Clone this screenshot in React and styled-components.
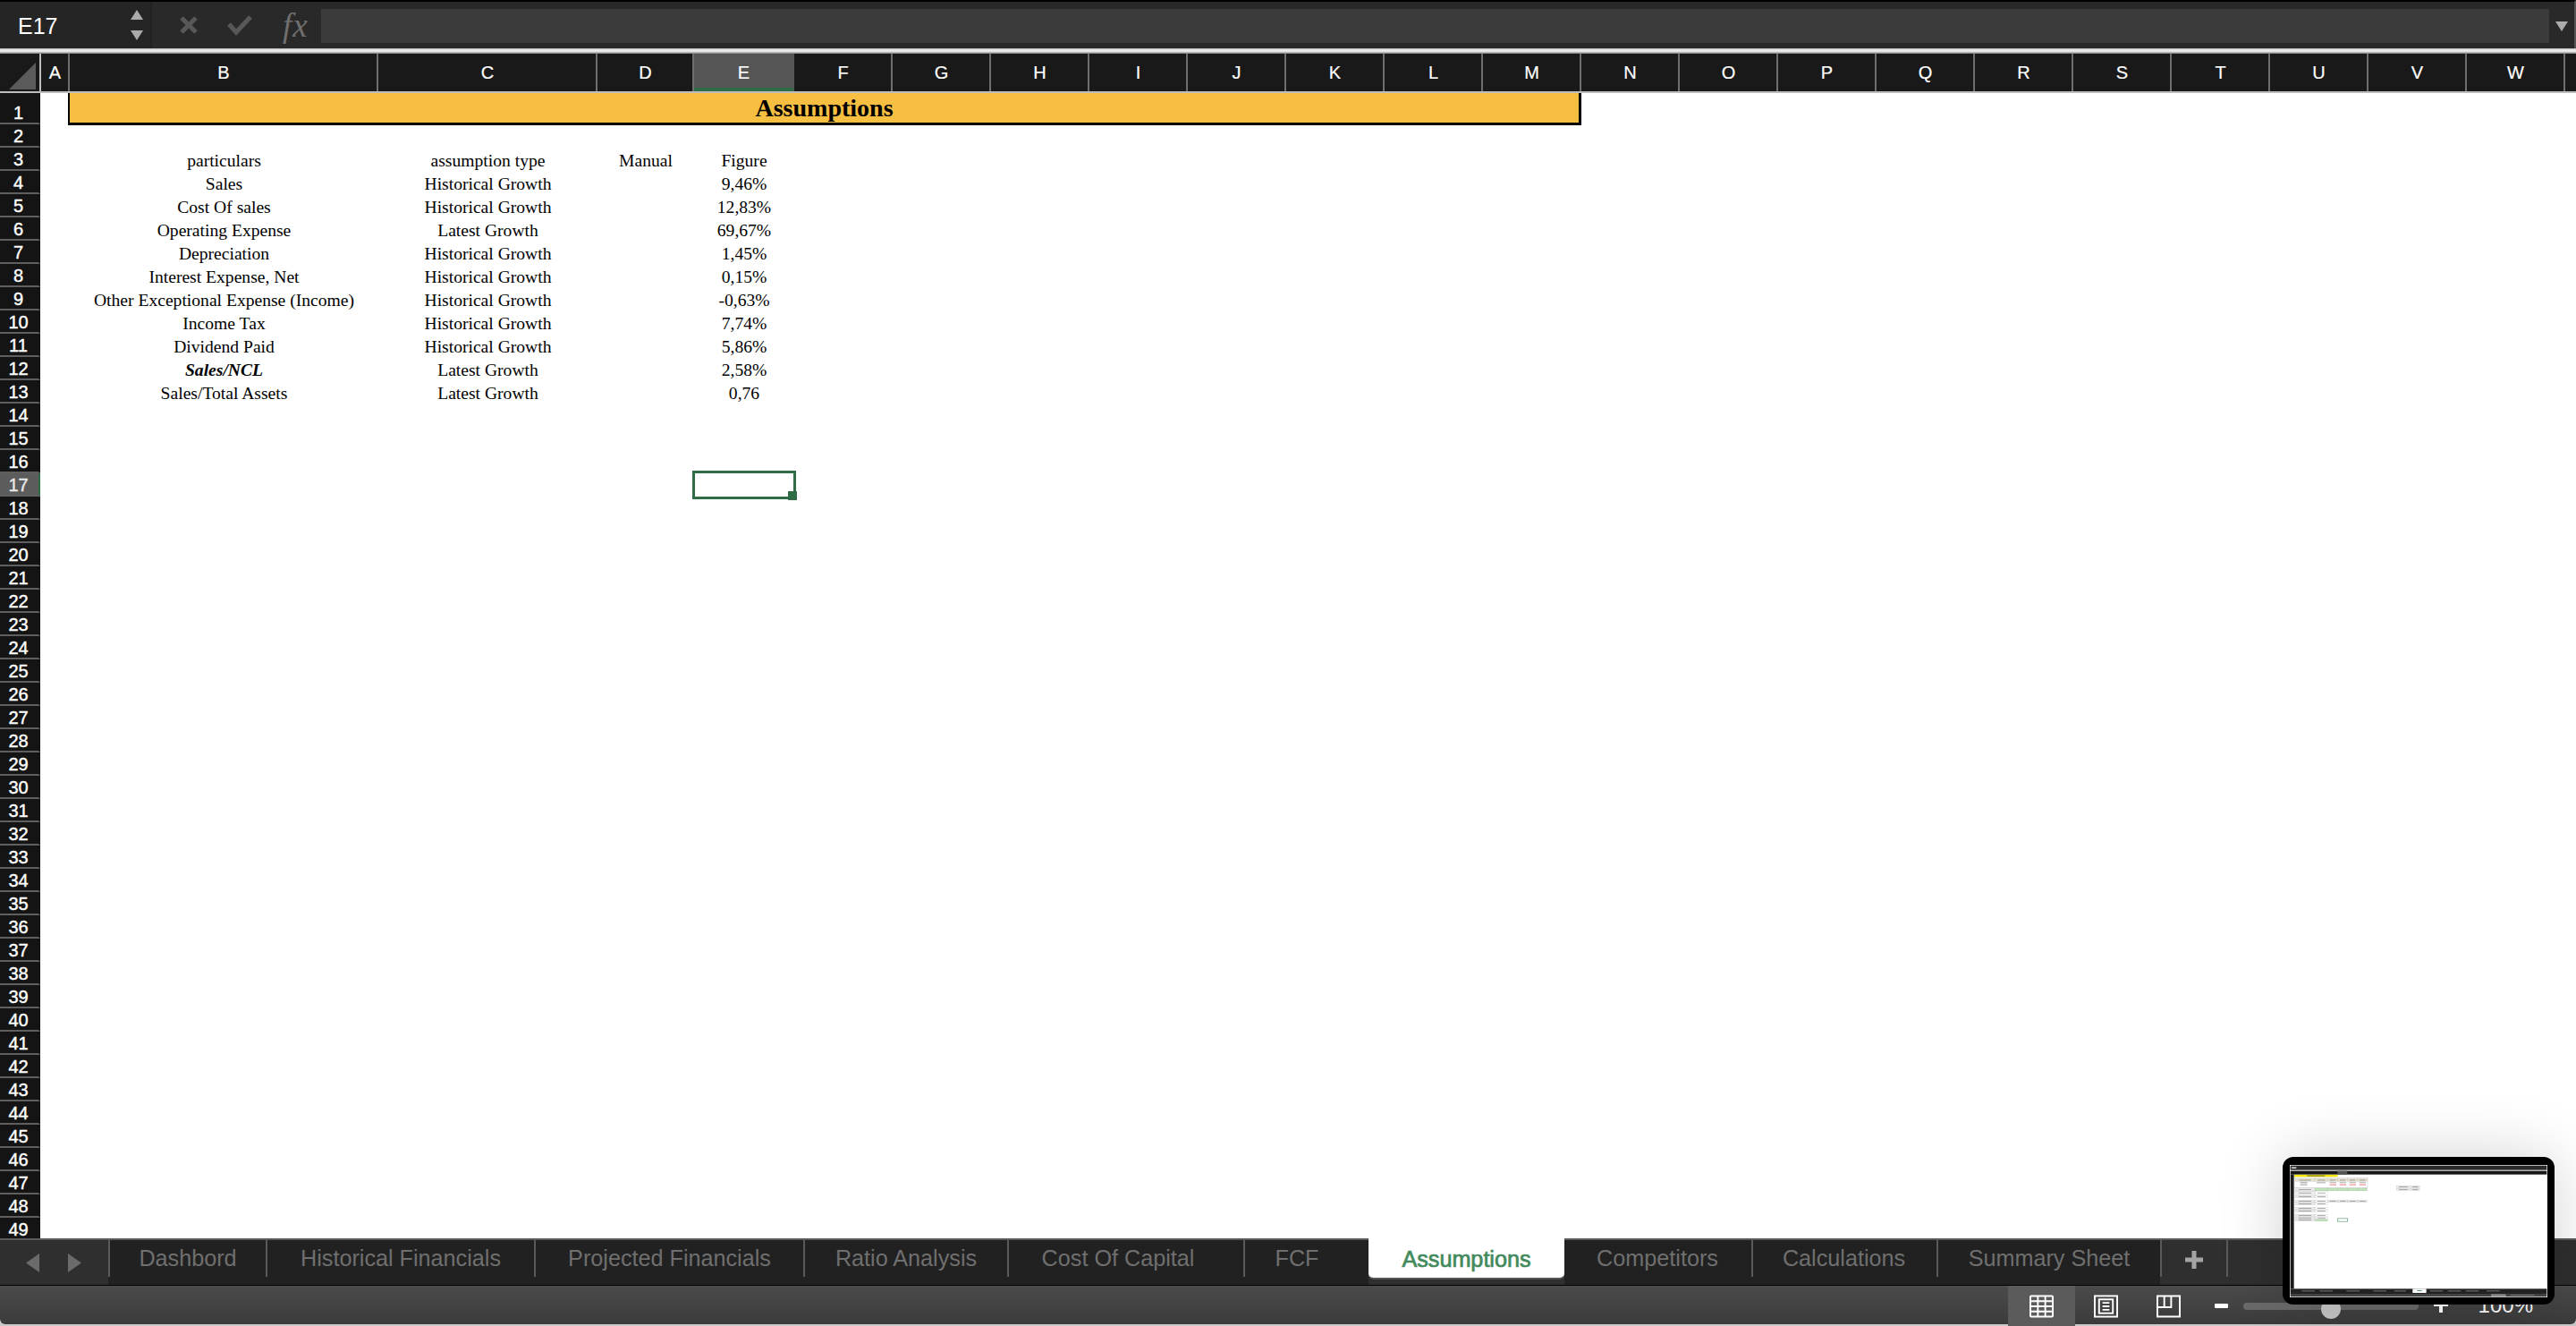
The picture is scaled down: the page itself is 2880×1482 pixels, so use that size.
import React from "react";
import styled, { createGlobalStyle } from "styled-components";

const Global = createGlobalStyle`
  html, body { margin: 0; padding: 0; background: #fff; overflow: hidden; }
  #root { width: 2880px; height: 1482px; }
`;

const Window = styled.div`
  position: relative; width: 2880px; height: 1482px; display: flex; flex-direction: column;
  overflow: hidden; background: #c9c9c9; font-family: "Liberation Sans", Arial, sans-serif;
`;
const Toolbar = styled.div`
  height: 52px; border-top: 2px solid #000; background: #292929; display: flex; align-items: stretch;
  box-sizing: content-box; flex: none; border-right: 2px solid #555;
`;
const NameBox = styled.div`
  width: 170px; display: flex; align-items: center; justify-content: space-between;
  background: #252525; border-right: 2px solid #222; padding: 2px 8px 0 20px; box-sizing: border-box;
  color: #fff; font-size: 25px;
`;
const Stepper = styled.div`display: flex; flex-direction: column; gap: 12px; margin-top: -2px;`;
const FormulaTools = styled.div`
  width: 189px; display: flex; align-items: center; padding-left: 30px; box-sizing: border-box;
`;
const Fx = styled.span`
  font-family: "Liberation Serif", serif; font-style: italic; font-size: 37px; color: #6f6f6f; margin-left: 33px; letter-spacing: 1px;
`;
const FormulaInput = styled.div`flex: 1; margin: 8px 0 6px; background: #3b3b3b;`;
const Expand = styled.div`width: 28px; display: flex; align-items: center; justify-content: center; padding-top: 2px;`;
const Rule = styled.div`
  height: 6px; flex: none; background: linear-gradient(#a8a8a8, #efefef 30%, #e4e4e4 60%, #777);
`;
const ColHeader = styled.div`
  height: 44px; box-sizing: border-box; flex: none; background: #191919; display: flex; border-bottom: 2px solid #bdbdbd;
`;
const Corner = styled.div`
  width: 46px; flex: none; border-right: 2px solid #bdbdbd; box-sizing: border-box; display: flex; align-items: flex-end;
`;
const ColCell = styled.div`
  width: ${p => p.$w}px; flex: none; box-sizing: border-box; display: flex; align-items: center; justify-content: center;
  padding-left: 1px;
  color: #fff; font-size: 20px; border-right: 2px solid #6e6e6e; position: relative; -webkit-text-stroke: 0.2px #fff;
  background: ${p => (p.$active ? "#555555" : "transparent")};
  ${p => p.$active ? "border-right-color:#555; border-bottom: 4px solid #2f6b45; padding-top: 4px;" : ""}
`;
const Sheet = styled.div`flex: 1; display: flex; min-height: 0; background: #fff; overflow: hidden;`;
const RowHeader = styled.div`width: 45px; flex: none; display: flex; flex-direction: column; background: #141414;`;
const RowNum = styled.div`
  height: ${p => p.$h}px; flex: none; box-sizing: border-box; width: 45px;
  display: flex; align-items: flex-end; justify-content: center; padding: 0 2px 0 0;
  color: ${p => (p.$active ? "#e8e8e8" : "#fff")}; font-size: 20px; line-height: 22px; -webkit-text-stroke: 0.4px currentColor;
  background: ${p => (p.$active ? "#5c5c5c" : "#141414")};
  border-bottom: 2px solid #5f5f5f;
  border-right: 2px solid ${p => (p.$active ? "#2f6b45" : "#141414")};
`;
const Grid = styled.div`
  flex: 1; display: grid; align-content: start;
  grid-template-columns: 33px 345px 245px 108px 112px repeat(18, 110px);
  grid-template-rows: 35px repeat(48, 26px);
`;
const Title = styled.div`
  grid-column: 2 / 14; grid-row: 1; background: #f6bf41; margin-left: -2px;
  border-left: 2px solid #000; border-right: 3px solid #000; border-bottom: 3px solid #000; box-sizing: border-box;
  display: flex; align-items: center; justify-content: center;
  font: bold 28px "Liberation Serif", serif; color: #000; height: 36px;
`;
const Cell = styled.div`
  grid-column: ${p => p.$col}; grid-row: ${p => p.$row};
  display: flex; align-items: center; justify-content: center; white-space: nowrap;
  font: ${p => (p.$em ? "italic bold" : "normal")} 19.6px/26px "Liberation Serif", serif; color: #000;
  padding: 4px 0 0 0; height: 26px; box-sizing: border-box;
`;
const Selection = styled.div`
  grid-column: 5; grid-row: 17; position: relative;
`;
const SelBox = styled.div`
  position: absolute; left: -2px; top: -3px; width: 116px; height: 32px; box-sizing: border-box; border: 3px solid #2f6b45;
`;
const SelHandle = styled.div`
  position: absolute; right: -4px; bottom: -4px; width: 10px; height: 10px; background: #2f6b45;
`;
const TabBar = styled.div`
  flex: none; display: flex; background: #2f2f2f; border-top: 2px solid #5c5c5c; border-bottom: 1px solid #000; box-sizing: content-box; height: 50px;
`;
const Scroller = styled.div`
  width: 121px; flex: none; display: flex; align-items: flex-start; gap: 32px; padding: 15px 0 0 29px; box-sizing: border-box; background: #2f2f2f;
`;
const Tabs = styled.div`display: flex; background: #212121; align-items: flex-start; height: 50px;`;
const Tab = styled.div`
  width: ${p => p.$w}px; flex: none; box-sizing: border-box; height: 41px;
  display: flex; align-items: center; justify-content: center; padding: 0 ${p => p.$pr || 0}px 0 0;
  border-left: 2px solid #5a5a5a; color: #6f6f6f; font-size: 25.2px; white-space: nowrap;
  ${p => p.$noRule ? "border-left-color: transparent;" : ""}
`;
const ActiveWrap = styled.div`
  width: ${p => p.$w}px; flex: none; height: 52px; background: #2f2f2f; margin-top: -2px;
`;
const ActiveTab = styled.div`
  height: 46px; background: #fff; border-bottom: 2px solid #555; border-radius: 0 0 6px 6px;
  display: flex; align-items: center; justify-content: center; padding-top: 2px; box-sizing: border-box;
  color: #428a5c; font-size: 25.2px; -webkit-text-stroke: 0.7px #428a5c;
`;
const AddTab = styled.div`
  width: 76px; flex: none; height: 41px; box-sizing: border-box; border-left: 2px solid #5a5a5a; border-right: 2px solid #5a5a5a;
  display: flex; align-items: center; justify-content: center; padding-top: 3px;
`;
const StatusBar = styled.div`
  flex: none; height: 43px; display: flex; align-items: stretch; justify-content: flex-end; border-radius: 0 0 6px 6px;
  background: linear-gradient(#4b4b4b, #3b3b3b); padding-right: 48px; margin-bottom: 2px;
`;
const ViewBtn = styled.div`
  width: ${p => p.$w}px; flex: none; display: flex; align-items: flex-start; justify-content: center; padding-top: 10px; box-sizing: border-box;
  background: ${p => (p.$active ? "#5b5b5b" : "transparent")};
  margin-bottom: ${p => (p.$active ? "-2px" : "0")};
`;
const ViewBtns = styled.div`display: flex; margin-right: 16px;`;
const Zoom = styled.div`display: flex; align-items: flex-start; padding-top: 20px; gap: 17px;`;
const Minus = styled.div`width: 15px; height: 5px; background: #fff; border-radius: 1px; margin-top: 0;`;
const Slider = styled.div`
  position: relative; width: 196px; height: 8px; border-radius: 4px; background: #6a6a6a; margin-top: -1px;
`;
const Thumb = styled.div`
  position: absolute; left: 87px; top: -4px; width: 22px; height: 22px; border-radius: 50%; background: #c7c7c7;
`;
const Plus = styled.div`
  position: relative; width: 16px; height: 16px; margin-top: -6px;
  &::before { content: ""; position: absolute; left: 0; right: 0; top: 5px; height: 4px; background: #fff; }
  &::after { content: ""; position: absolute; top: 0; bottom: 0; left: 6px; width: 4px; background: #fff; }
`;
const Percent = styled.div`color: #fff; font-size: 24px; line-height: 24px; margin: -10px 0 0 17px;`;
const Preview = styled.div`
  position: absolute; left: 2552px; top: 1293px; width: 304px; height: 165px; box-sizing: border-box;
  background: #000; border-radius: 12px; padding: 9px 8px 8px 8px;
  box-shadow: 0 0 70px rgba(0,0,0,.18);
`;
const PreviewSvg = styled.svg`display: block; width: 288px; height: 148px;`;

const Tri = ({ down, c = "#ababab", w = 14, h = 11 }) => (
  <svg width={w} height={h} viewBox="0 0 14 11"><polygon points={down ? "0,0 14,0 7,11" : "7,0 14,11 0,11"} fill={c} /></svg>
);
const X = () => (
  <svg width="22" height="22" viewBox="0 0 22 22"><path d="M3 3L19 19M19 3L3 19" stroke="#585858" strokeWidth="5" /></svg>
);
const Check = () => (
  <svg width="30" height="24" viewBox="0 0 30 24" style={{ marginLeft: 31 }}><path d="M3 11L11 20L27 3" stroke="#585858" strokeWidth="5" fill="none" /></svg>
);
const GridIcon = () => (
  <svg width="27" height="26" viewBox="0 0 28 26" fill="none" stroke="#fff" strokeWidth="2">
    <rect x="1" y="1" width="26" height="24" rx="1" />
    <path d="M9.7 1V25M18.3 1V25M1 7H27M1 13H27M1 19H27" />
  </svg>
);
const PageIcon = () => (
  <svg width="27" height="26" viewBox="0 0 28 26" fill="none" stroke="#fff" strokeWidth="2">
    <rect x="1" y="1" width="26" height="24" />
    <rect x="6" y="5" width="16" height="16" />
    <path d="M10 9H18M10 13H18M10 17H18" />
  </svg>
);
const LayoutIcon = () => (
  <svg width="27" height="26" viewBox="0 0 28 26" fill="none" stroke="#fff" strokeWidth="2">
    <path d="M1 1H27V25H1ZM1 14H17V1M9 1V14" />
  </svg>
);

const cols = "FGHIJKLMNOPQRSTUVW".split("");
const rowData = [
  ["particulars", "assumption type", "Manual", "Figure"],
  ["Sales", "Historical Growth", "", "9,46%"],
  ["Cost Of sales", "Historical Growth", "", "12,83%"],
  ["Operating Expense", "Latest Growth", "", "69,67%"],
  ["Depreciation", "Historical Growth", "", "1,45%"],
  ["Interest Expense, Net", "Historical Growth", "", "0,15%"],
  ["Other Exceptional Expense (Income)", "Historical Growth", "", "-0,63%"],
  ["Income Tax", "Historical Growth", "", "7,74%"],
  ["Dividend Paid", "Historical Growth", "", "5,86%"],
  ["Sales/NCL", "Latest Growth", "", "2,58%", true],
  ["Sales/Total Assets", "Latest Growth", "", "0,76"],
];
const tabs = [
  ["Dashbord", 176], ["Historical Financials", 300], ["Projected Financials", 301], ["Ratio Analysis", 228],
  ["Cost Of Capital", 264, 18], ["FCF", 140, 22],
];
const tabsAfter = [["Competitors", 209, 3], ["Calculations", 207, 2], ["Summary Sheet", 250]];

const MiniSheet = () => {
  const labelled = [
    [78, 128, 66, 9], [78, 138, 66, 12], [78, 153, 66, 7], [78, 168, 66, 8], [78, 177, 66, 8],
    [78, 192, 66, 8], [78, 201, 66, 7], [78, 216, 66, 7], [78, 225, 66, 6], [78, 232, 66, 7],
    [145, 138, 42, 12], [145, 153, 42, 7], [145, 168, 42, 8], [145, 177, 42, 8], [145, 192, 42, 8],
    [145, 201, 42, 7], [145, 216, 42, 7], [145, 225, 42, 6], [418, 120, 46, 7], [418, 129, 46, 7],
    [465, 120, 31, 7], [465, 129, 31, 7], [188, 168, 33, 8], [221, 168, 33, 8], [254, 168, 33, 8], [287, 168, 33, 8],
  ];
  const greens = [[145, 128, 42, 9], [188, 128, 33, 9], [221, 128, 33, 9], [254, 128, 33, 9], [287, 128, 33, 9], [145, 232, 42, 7]];
  const headers = [[78, 97, 66], [145, 97, 42], [188, 97, 33], [221, 97, 33], [254, 97, 33], [287, 97, 33]];
  const tabXs = [100, 160, 250, 340, 410, 530, 590, 650, 720];
  return (
    <PreviewSvg viewBox="60 50 864 445" preserveAspectRatio="none">
      <defs><filter id="b"><feGaussianBlur stdDeviation="0.9" /></filter></defs>
      <rect x="60" y="50" width="864" height="445" fill="#fff" />
      <g filter="url(#b)">
        <rect x="62" y="52" width="860" height="15" fill="#2c2c2c" />
        <rect x="66" y="57" width="16" height="5" fill="#ccc" />
        <rect x="62" y="70" width="860" height="12" fill="#171717" />
        <rect x="220" y="70" width="33" height="12" fill="#555" />
        <rect x="62" y="82" width="12" height="384" fill="#1c1c1c" />
        <rect x="75" y="83" width="146" height="7" fill="#f4e500" />
        <rect x="118" y="85" width="60" height="3" fill="#6b6400" />
        <rect x="75" y="94" width="246" height="33" fill="#fff" stroke="#aaa" strokeWidth="1" />
        {headers.map(([x, y, w], i) => (
          <g key={i}>
            <rect x={x} y={y} width={w} height={8} fill="#e6e2c8" stroke="#999" strokeWidth="0.6" />
            <rect x={x + w * 0.2} y={y + 3} width={w * 0.6} height="2" fill="#777" />
          </g>
        ))}
        {[188, 221, 254, 287].map(x => <rect key={x} x={x + 6} y="108" width="22" height="3" fill="#aaa" />)}
        {[188, 221, 254, 287].map(x => <rect key={x} x={x + 6} y="115" width="22" height="3" fill="#ec7b7b" />)}
        <rect x="95" y="108" width="24" height="3" fill="#999" />
        <rect x="95" y="115" width="24" height="3" fill="#999" />
        <rect x="150" y="108" width="30" height="3" fill="#aaa" />
        {greens.map(([x, y, w, h], i) => <rect key={i} x={x} y={y} width={w} height={h} fill="#bfe2b8" stroke="#8a8" strokeWidth="0.6" />)}
        {labelled.map(([x, y, w, h], i) => (
          <g key={i}>
            <rect x={x} y={y} width={w} height={h} fill={i < 10 || i > 17 ? "#eeeeee" : "#fff"} stroke="#999" strokeWidth="0.6" />
            <rect x={x + w * 0.18} y={y + h / 2 - 1} width={w * 0.64} height="2" fill="#888" />
          </g>
        ))}
        <rect x="220" y="230" width="34" height="10" fill="#fff" stroke="#5c9a70" strokeWidth="2" />
        <rect x="62" y="466" width="860" height="17" fill="#232323" />
        {tabXs.map(x => <rect key={x} x={x} y="472" width={x === 410 ? 40 : 44} height="3" fill="#777" />)}
        <rect x="472" y="466" width="46" height="14" fill="#fff" />
        <rect x="487" y="471" width="16" height="3" fill="#4a8a5f" />
        <rect x="62" y="483" width="860" height="10" fill="#434343" />
        <rect x="735" y="484" width="50" height="8" fill="#888" />
        <rect x="800" y="487" width="80" height="2" fill="#888" />
      </g>
    </PreviewSvg>
  );
};

function Tri2({ right }) {
  return (
    <svg width="15" height="21" viewBox="0 0 15 21">
      <polygon points={right ? "0,0 15,10.5 0,21" : "15,0 0,10.5 15,21"} fill="#6b6b6b" />
    </svg>
  );
}

export default function App() {
  const rowNums = Array.from({ length: 49 }, (_, i) => i + 1);
  return (
    <Window>
      <Global />
      <Toolbar>
        <NameBox>
          E17
          <Stepper><Tri /><Tri down /></Stepper>
        </NameBox>
        <FormulaTools>
          <X /><Check /><Fx>fx</Fx>
        </FormulaTools>
        <FormulaInput />
        <Expand><Tri down /></Expand>
      </Toolbar>
      <Rule />
      <ColHeader>
        <Corner>
          <svg width="40" height="40" viewBox="0 0 40 40"><polygon points="10,38 40,8 40,38" fill="#5a5a5a" /></svg>
        </Corner>
        <ColCell $w={32}>A</ColCell>
        <ColCell $w={345}>B</ColCell>
        <ColCell $w={245}>C</ColCell>
        <ColCell $w={108}>D</ColCell>
        <ColCell $w={112} $active>E</ColCell>
        {cols.map(c => <ColCell key={c} $w={110}>{c}</ColCell>)}
      </ColHeader>
      <Sheet>
        <RowHeader>
          {rowNums.map(n => <RowNum key={n} $h={n === 1 ? 35 : 26} $active={n === 17}>{n}</RowNum>)}
        </RowHeader>
        <Grid>
          <Title>Assumptions</Title>
          {rowData.map((r, i) => (
            <React.Fragment key={i}>
              <Cell $col={2} $row={i + 3} $em={r[4]}>{r[0]}</Cell>
              <Cell $col={3} $row={i + 3}>{r[1]}</Cell>
              {r[2] && <Cell $col={4} $row={i + 3}>{r[2]}</Cell>}
              <Cell $col={5} $row={i + 3}>{r[3]}</Cell>
            </React.Fragment>
          ))}
          <Selection><SelBox><SelHandle /></SelBox></Selection>
        </Grid>
      </Sheet>
      <TabBar>
        <Scroller><Tri2 /><Tri2 right /></Scroller>
        <Tabs>
          {tabs.map(([t, w, pr]) => <Tab key={t} $w={w} $pr={pr}>{t}</Tab>)}
        </Tabs>
        <ActiveWrap $w={219}><ActiveTab>Assumptions</ActiveTab></ActiveWrap>
        <Tabs>
          {tabsAfter.map(([t, w, pr], i) => <Tab key={t} $w={w} $pr={pr} $noRule={i === 0}>{t}</Tab>)}
        </Tabs>
        <AddTab>
          <svg width="24" height="24" viewBox="0 0 24 24"><path d="M12 2V22M2 12H22" stroke="#a4a4a4" strokeWidth="5" /></svg>
        </AddTab>
      </TabBar>
      <StatusBar>
        <ViewBtns>
          <ViewBtn $w={75} $active><GridIcon /></ViewBtn>
          <ViewBtn $w={70}><PageIcon /></ViewBtn>
          <ViewBtn $w={70}><LayoutIcon /></ViewBtn>
        </ViewBtns>
        <Zoom>
          <Minus />
          <Slider><Thumb /></Slider>
          <Plus />
          <Percent>100%</Percent>
        </Zoom>
      </StatusBar>
      <Preview><MiniSheet /></Preview>
    </Window>
  );
}
